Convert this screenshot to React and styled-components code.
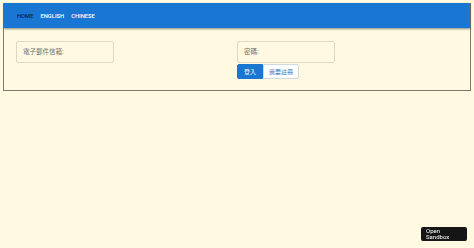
import React from 'react'
import styled, { createGlobalStyle } from 'styled-components'

const GlobalStyle = createGlobalStyle`
  html, body {
    margin: 0;
    padding: 0;
    background: #fef9e0;
    font-family: Roboto, "Noto Sans CJK TC", sans-serif;
  }
  body {
    padding: 3px;
    min-height: 248px;
    box-sizing: border-box;
  }
`

const Frame = styled.div`
  border: 1px solid #7d7a6c;
  border-top: none;
`

const Header = styled.header`
  background: #1976d2;
  height: 25px;
  display: flex;
  align-items: center;
  padding: 0 12px;
  gap: 5px;
  box-shadow: 0 1px 2px rgba(0, 0, 0, 0.45);
`

const NavLink = styled.a`
  font-size: 5.8px;
  font-weight: 500;
  color: ${p => (p.active ? '#0b2545' : '#ffffff')};
  text-transform: uppercase;
  padding: 0 1px;
`

const Body = styled.div`
  display: grid;
  grid-template-columns: 1fr 1fr;
  padding: 13px 12px 13px;
  height: 62px;
  box-sizing: border-box;
`

const Field = styled.div`
  display: flex;
  flex-direction: column;
  align-items: flex-start;
`

const Input = styled.input`
  width: 98px;
  height: 22px;
  box-sizing: border-box;
  border: 1px solid #ddd9c4;
  border-radius: 2px;
  background: #fef9e0;
  padding: 0 6px;
  font-size: 6.5px;
  font-family: inherit;
  &::placeholder {
    color: #6f6f6f;
  }
`

const Buttons = styled.div`
  display: flex;
  margin-top: 1px;
`

const Button = styled.button`
  height: 15px;
  font-size: 6px;
  font-family: inherit;
  padding: 0 ${p => (p.primary ? 6 : 5)}px;
  border-radius: ${p => (p.primary ? '2px 0 0 2px' : '0 2px 2px 0')};
  border: 1px solid ${p => (p.primary ? '#1976d2' : '#cfd8dc')};
  background: ${p => (p.primary ? '#1976d2' : '#ffffff')};
  color: ${p => (p.primary ? '#ffffff' : '#3b78c0')};
`

const Sandbox = styled.div`
  position: fixed;
  right: 7px;
  bottom: 7px;
  width: 46px;
  height: 14px;
  background: #151515;
  color: #fff;
  font-size: 6px;
  line-height: 6px;
  padding: 1px 5px;
  box-sizing: border-box;
  border-radius: 2px;
`

export default function App() {
  return (
    <>
      <GlobalStyle />
      <Frame>
        <Header>
          <NavLink active>Home</NavLink>
          <NavLink>English</NavLink>
          <NavLink>Chinese</NavLink>
        </Header>
        <Body>
          <Field>
            <Input placeholder="電子郵件信箱:" />
          </Field>
          <Field>
            <Input type="password" placeholder="密碼:" />
            <Buttons>
              <Button primary>登入</Button>
              <Button>我要註冊</Button>
            </Buttons>
          </Field>
        </Body>
      </Frame>
      <Sandbox>Open<br />Sandbox</Sandbox>
    </>
  )
}
